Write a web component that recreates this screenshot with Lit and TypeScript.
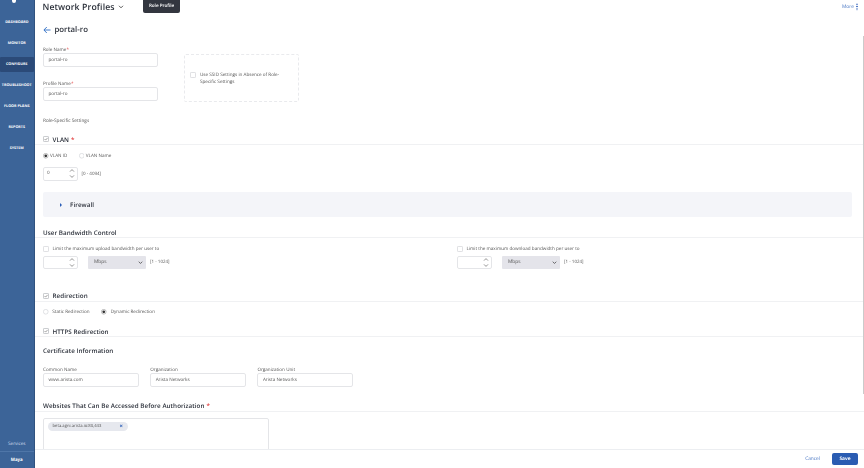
import { LitElement, html, css } from "lit";
import { customElement } from "lit/decorators.js";

const check = html`<svg class="cb" viewBox="0 0 6 6"><rect x=".4" y=".4" width="5.2" height="5.2" rx="1" fill="#fff" stroke="#9a9ea5" stroke-width=".6"/><path d="M1.5 3l1.1 1.1 2-2.2" fill="none" stroke="#666" stroke-width=".6"/></svg>`;
const uncheck = html`<svg class="cb" viewBox="0 0 6 6"><rect x=".4" y=".4" width="5.2" height="5.2" rx="1" fill="#fff" stroke="#c4c6cb" stroke-width=".6"/></svg>`;
const radioOff = html`<svg class="rd" viewBox="0 0 6 6"><circle cx="3" cy="3" r="2.6" fill="#fff" stroke="#c0c2c7" stroke-width=".5"/></svg>`;
const radioOn = html`<svg class="rd" viewBox="0 0 6 6"><circle cx="3" cy="3" r="2.6" fill="#fff" stroke="#777" stroke-width=".5"/><circle cx="3" cy="3" r="1.5" fill="#333"/></svg>`;
const spin = html`<svg class="spin" viewBox="0 0 6 11"><path d="M1 3.6L3 1.6 5 3.6M1 7.4L3 9.4 5 7.4" fill="none" stroke="#666" stroke-width=".7"/></svg>`;
const caret = html`<svg class="caret" viewBox="0 0 7 5"><path d="M1 1l2.5 2.5L6 1" fill="none" stroke="#333" stroke-width="1"/></svg>`;

@customElement("app-root")
export class AppRoot extends LitElement {
  static styles = css`
    :host { display: flex; width: 864px; height: 468px; overflow: hidden; background: #fff; font-family: "Open Sans", sans-serif; color: #555; font-size: 4.6px; line-height: 7px; text-rendering: geometricPrecision; }
    * { box-sizing: border-box; }
    aside { width: 34.5px; flex: none; background: #3c6498; border-right: 1px solid #30527f; display: flex; flex-direction: column; color: #fff; }
    .dot { width: 4px; height: 3px; border-radius: 0 0 2px 2px; background: #fff; margin-left: 12px; }
    nav { display: flex; flex-direction: column; margin-top: 8.5px; flex: 1; }
    nav div { height: 21px; padding-top: 1px; display: flex; align-items: center; justify-content: center; font-size: 3.7px; font-weight: 700; white-space: nowrap; color: #fff; }
    nav div.on { height: 15px; margin: 3px 0; background: #2b4a78; border-radius: 1px; }
    .svc { height: 15px; padding-top: 1px; font-size: 4.6px; display: flex; align-items: center; justify-content: center; color: #d3deec; border-bottom: 1px solid #4f76a8; }
    .user { height: 16px; padding-top: 1px; font-size: 4.4px; font-weight: 700; display: flex; align-items: center; justify-content: center; }
    main { flex: 1; min-width: 0; display: flex; flex-direction: column; position: relative; will-change: transform; }
    .scrollbar { position: absolute; right: 0; top: 36px; width: 2px; height: 358px; background: #cbcbcb; }
    header { height: 14px; display: flex; align-items: center; padding: 0 7px 0 7.5px; flex: none; }
    h1 { margin: 0; font-size: 8.7px; line-height: 12px; font-weight: 600; color: #2b303a; letter-spacing: .12px; }
    .caret { width: 6px; height: 4px; margin-left: 3px; }
    .tip { position: absolute; left: 108.3px; top: 0; width: 36.5px; height: 12.7px; padding-top: 1px; background: #33363f; color: #fff; border-radius: 0 0 2px 2px; font-size: 4.6px; font-weight: 600; display: flex; align-items: center; justify-content: center; }
    .more { margin-left: auto; display: flex; align-items: center; gap: 2px; color: #4a78c4; font-size: 4.8px; }
    .more span:first-child { padding-top: 1px; }
    .dots { width: 1.6px; height: 7.2px; background: radial-gradient(circle, #3d6cc0 .8px, transparent .9px) 0 0 / 1.6px 2.4px; }
    .scroll { flex: 1; min-height: 0; overflow: hidden; padding-left: 8px; }
    .title { display: flex; align-items: center; height: 12px; margin-top: 10px; font-size: 7.8px; font-weight: 600; color: #2b303a; }
    .title span { padding-top: 1px; }
    .title svg { width: 8px; height: 8px; margin-right: 3.5px; }
    .top { display: flex; gap: 26px; margin-top: 11px; }
    .col { width: 115px; }
    label.f { display: block; line-height: 6px; height: 6px; white-space: nowrap; }
    .req { color: #e03030; }
    .sec .req { margin-left: -1.5px; }
    .in { height: 14px; border: 1px solid #e4e5e8; border-radius: 2px; padding: 1px 0 0 4.5px; display: flex; align-items: center; background: #fff; }
    .gap { height: 14px; }
    .box { width: 115px; height: 48px; margin-top: 7px; border: 1px dashed #e9eaed; border-radius: 2px; padding: 0 8px 0 5px; display: flex; align-items: center; gap: 4px; }
    .box span { padding-top: 2px; }
    .box .cb { margin-top: -7px; }
    .cb { width: 6px; height: 6px; flex: none; display: block; }
    .rd { width: 5.5px; height: 5.5px; flex: none; display: block; }
    .rs { margin-top: 15.5px; height: 7px; font-size: 4.7px; }
    .sec { display: flex; align-items: center; gap: 3.5px; height: 7px; font-size: 6.25px; font-weight: 600; color: #2b303a; white-space: nowrap; letter-spacing: .05px; }
    .rule { height: 1px; background: #f0f1f3; margin: 1.8px 0 0 -8px; }
    .radios { display: flex; align-items: center; height: 7px; gap: 1.5px; }
    .radios.wide { gap: 3.8px; }
    .rl { margin-right: 10px; padding-top: 1px; white-space: nowrap; }
    .wide .rl { margin-right: 8px; }
    .spinrow { display: flex; align-items: center; }
    .num { width: 34.5px; height: 14px; border: 1px solid #e4e5e8; border-radius: 2px; display: flex; align-items: center; justify-content: space-between; padding: 0 1.5px 0 3px; flex: none; }
    .num.short { height: 13px; }
    .spin { width: 6px; height: 11px; }
    .hint { margin-left: 4px; padding-top: 1px; font-size: 4.5px; white-space: nowrap; }
    .fw { height: 25px; width: 808.5px; margin-top: 11px; background: #f4f5f9; border-radius: 2px; display: flex; align-items: center; padding: 1px 0 0 17px; font-size: 6.25px; font-weight: 600; color: #2b303a; gap: 8px; letter-spacing: .05px; }
    .tri { width: 0; height: 0; border-left: 2.5px solid #2b5fb8; border-top: 2px solid transparent; border-bottom: 2px solid transparent; }
    .bw { display: flex; margin-top: 7.1px; }
    .bwc { width: 414px; flex: none; }
    .lim { display: flex; align-items: center; gap: 3.5px; height: 7px; padding-top: 1px; white-space: nowrap; }
    .lim .cb { margin-top: -1px; }
    .ctl { display: flex; align-items: center; margin-top: 3.3px; }
    .sel { width: 58px; height: 13px; margin-left: 10.5px; background: #e4e4ea; border-radius: 1px; padding: 1px 3px 0 6px; display: flex; align-items: center; justify-content: space-between; flex: none; font-size: 4.8px; }
    .sel .caret { margin: 0; width: 5px; height: 3.5px; }
    .certs { display: flex; gap: 11.5px; margin-top: 13px; }
    .certs > div { width: 95.7px; }
    .area { width: 225.5px; height: 60px; margin-top: 6.7px; border: 1px solid #e4e5e8; border-radius: 2px; padding: 2.3px 3.5px; }
    .chip { width: 80.5px; height: 9px; border-radius: 5px; background: #e6e8ee; display: flex; align-items: center; justify-content: space-between; padding: 0 5px; font-size: 4.2px; }
    .x { color: #2b5fb8; font-size: 6px; font-weight: 700; line-height: 7px; }
    footer { height: 19px; flex: none; border-top: 1px solid #eceef1; display: flex; align-items: center; justify-content: flex-end; padding-right: 6.5px; background: #fff; }
    .cancel { color: #4a78c4; font-size: 4.8px; margin-right: 12px; padding-top: 1px; }
    .save { width: 26px; height: 11.4px; padding-top: 1px; background: #2a5cb2; color: #fff; font-size: 4.8px; font-weight: 700; border-radius: 2px; display: flex; align-items: center; justify-content: center; }
    .m-vlan { margin-top: 11px; }
    .m-r1 { margin-top: 7px; }
    .m-spin { margin-top: 7.5px; }
    .m-ubw { margin-top: 11.8px; }
    .m-red { margin-top: 23.5px; }
    .m-r2 { margin-top: 6.5px; }
    .m-https { margin-top: 12px; }
    .m-cert { margin-top: 10px; }
    .m-web { margin-top: 14.5px; }
  `;

  render() {
    return html`
      <aside>
        <div class="dot"></div>
        <nav>
          <div>DASHBOARD</div><div>MONITOR</div><div class="on">CONFIGURE</div><div>TROUBLESHOOT</div><div>FLOOR PLANS</div><div>REPORTS</div><div>SYSTEM</div>
        </nav>
        <div class="svc">Services</div>
        <div class="user">Maya</div>
      </aside>
      <main>
        <header>
          <h1>Network Profiles</h1>${caret}
          <div class="more"><span>More</span><span class="dots"></span></div>
        </header>
        <div class="tip">Role Profile</div>
        <div class="scroll">
          <div class="title"><svg viewBox="0 0 8 8"><path d="M7.5 4H1M3.8 1L.9 4l2.9 3" fill="none" stroke="#2b6cc4" stroke-width=".9"/></svg><span>portal-ro</span></div>
          <div class="top">
            <div class="col">
              <label class="f">Role Name<span class="req">*</span></label>
              <div class="in">portal-ro</div>
              <div class="gap"></div>
              <label class="f">Profile Name<span class="req">*</span></label>
              <div class="in">portal-ro</div>
            </div>
            <div class="box">${uncheck}<span>Use SSID Settings in Absence of Role-Specific Settings</span></div>
          </div>
          <div class="rs">Role-Specific Settings</div>
          <div class="sec m-vlan">${check}VLAN <span class="req">*</span></div>
          <div class="rule"></div>
          <div class="radios m-r1">${radioOn}<span class="rl">VLAN ID</span>${radioOff}<span class="rl">VLAN Name</span></div>
          <div class="spinrow m-spin"><div class="num">0${spin}</div><span class="hint">[0 - 4094]</span></div>
          <div class="fw"><span class="tri"></span>Firewall</div>
          <div class="sec m-ubw">User Bandwidth Control</div>
          <div class="rule"></div>
          <div class="bw">
            <div class="bwc">
              <div class="lim">${uncheck}Limit the maximum upload bandwidth per user to</div>
              <div class="ctl"><div class="num short"><span></span>${spin}</div><div class="sel">Mbps${caret}</div><span class="hint">[1 - 1024]</span></div>
            </div>
            <div class="bwc">
              <div class="lim">${uncheck}Limit the maximum download bandwidth per user to</div>
              <div class="ctl"><div class="num short"><span></span>${spin}</div><div class="sel">Mbps${caret}</div><span class="hint">[1 - 1024]</span></div>
            </div>
          </div>
          <div class="sec m-red">${check}Redirection</div>
          <div class="rule"></div>
          <div class="radios wide m-r2">${radioOff}<span class="rl">Static Redirection</span>${radioOn}<span class="rl">Dynamic Redirection</span></div>
          <div class="sec m-https">${check}HTTPS Redirection</div>
          <div class="rule"></div>
          <div class="sec m-cert">Certificate Information</div>
          <div class="certs">
            <div><label class="f">Common Name</label><div class="in">www.arista.com</div></div>
            <div><label class="f">Organization</label><div class="in">Arista Networks</div></div>
            <div><label class="f">Organization Unit</label><div class="in">Arista Networks</div></div>
          </div>
          <div class="sec m-web">Websites That Can Be Accessed Before Authorization <span class="req">*</span></div>
          <div class="rule"></div>
          <div class="area"><div class="chip">beta.agni.arista.io:80,443<span class="x">×</span></div></div>
        </div>
        <footer><span class="cancel">Cancel</span><span class="save">Save</span></footer>
        <div class="scrollbar"></div>
      </main>
    `;
  }
}
